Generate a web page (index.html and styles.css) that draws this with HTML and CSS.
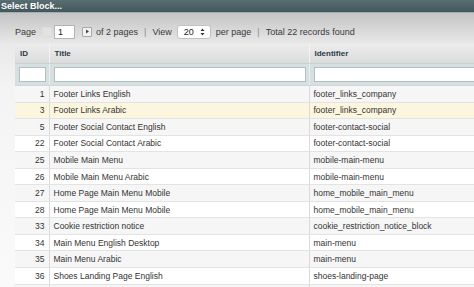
FILE: index.html
```html
<!DOCTYPE html>
<html lang="en">
<head>
  <meta charset="UTF-8" />
  <title>Select Block...</title>
  <link rel="stylesheet" href="styles.css">
</head>
<body>
  <div class="titlebar">Select Block...</div>

  <div class="main">
    <div class="pager">
      <span>Page</span>
      <span class="pg-btn pg-prev"></span>
      <input class="pg-input" type="text" value="1" />
      <span class="pg-btn pg-next">
        <svg width="5" height="5" viewBox="0 0 5 5"><path d="M1 0.5 L4 2.5 L1 4.5 Z" fill="#444"/></svg>
      </span>
      <span class="pg-of">of 2 pages</span>
      <span class="sep">|</span>
      <span>View</span>
      <span class="pg-select">
        20
        <svg width="5" height="8" viewBox="0 0 5 8"><path d="M2.5 0.5 L4.5 3 L0.5 3 Z M2.5 7.5 L4.5 5 L0.5 5 Z" fill="#333"/></svg>
      </span>
      <span>per page</span>
      <span class="sep">|</span>
      <span>Total 22 records found</span>
    </div>

    <table class="grid">
      <colgroup>
        <col class="col-id" />
        <col class="col-title" />
        <col />
      </colgroup>
      <thead>
        <tr class="headings">
          <th>ID</th>
          <th>Title</th>
          <th>Identifier</th>
        </tr>
        <tr class="filter">
          <td><input type="text" /></td>
          <td><input type="text" /></td>
          <td><input type="text" /></td>
        </tr>
      </thead>
      <tbody>
        <tr><td class="num">1</td><td>Footer Links English</td><td>footer_links_company</td></tr>
        <tr class="hover"><td class="num">3</td><td>Footer Links Arabic</td><td>footer_links_company</td></tr>
        <tr><td class="num">5</td><td>Footer Social Contact English</td><td>footer-contact-social</td></tr>
        <tr><td class="num">22</td><td>Footer Social Contact Arabic</td><td>footer-contact-social</td></tr>
        <tr><td class="num">25</td><td>Mobile Main Menu</td><td>mobile-main-menu</td></tr>
        <tr><td class="num">26</td><td>Mobile Main Menu Arabic</td><td>mobile-main-menu</td></tr>
        <tr><td class="num">27</td><td>Home Page Main Menu Mobile</td><td>home_mobile_main_menu</td></tr>
        <tr><td class="num">28</td><td>Home Page Main Menu Mobile</td><td>home_mobile_main_menu</td></tr>
        <tr><td class="num">33</td><td>Cookie restriction notice</td><td>cookie_restriction_notice_block</td></tr>
        <tr><td class="num">34</td><td>Main Menu English Desktop</td><td>main-menu</td></tr>
        <tr><td class="num">35</td><td>Main Menu Arabic</td><td>main-menu</td></tr>
        <tr><td class="num">36</td><td>Shoes Landing Page English</td><td>shoes-landing-page</td></tr>
        <tr><td></td><td></td><td></td></tr>
      </tbody>
    </table>
  </div>
</body>
</html>
```

FILE: styles.css
```css
html, body {
  height: 100%;
}
body {
  margin: 0;
  overflow: hidden;
  font-family: "Liberation Sans", Arial, sans-serif;
  color: #333;
  background: linear-gradient(#c4c4c4 13px, #e9e9e9 44px, #f4f4f4 90px, #fafafa 100%);
}
.titlebar {
  height: 13px;
  line-height: 12px;
  padding-left: 1px;
  font-size: 9px;
  font-weight: bold;
  color: #fff;
  background: linear-gradient(#586e72, #42575b);
  border-bottom: 1px solid #9fb0b2;
  box-sizing: border-box;
}
.main {
  padding-left: 15px;
}
.pager {
  height: 31px;
  padding-top: 6px;
  box-sizing: border-box;
  display: flex;
  align-items: center;
  font-size: 9px;
  color: #3a3a3a;
  white-space: nowrap;
}
.pg-btn {
  width: 8px;
  height: 8px;
  display: flex;
  align-items: center;
  justify-content: center;
  border-radius: 1px;
}
.pg-prev {
  margin-left: 6px;
  background: #e2e2e2;
  border: 1px solid #dcdcdc;
}
.pg-input {
  margin: 0 0 0 2px;
  width: 21px;
  height: 14px;
  padding: 0 3px;
  box-sizing: border-box;
  border: 1px solid #b4b4b4;
  font: 9px "Liberation Sans", Arial, sans-serif;
  color: #222;
}
.pg-next {
  margin-left: 7px;
  background: #f2f2f2;
  border: 1px solid #a8a8a8;
}
.pg-of {
  margin-left: 4px;
}
.sep {
  margin: 0 6px 0 6px;
  color: #888;
}
.pg-select {
  margin: 0 5px 0 5px;
  width: 34px;
  height: 14px;
  box-sizing: border-box;
  padding: 0 5px 0 6px;
  display: flex;
  align-items: center;
  justify-content: space-between;
  background: #fff;
  border: 1px solid #c2c2c2;
  border-radius: 3px;
  color: #222;
}
.grid {
  width: 490px;
  border-collapse: collapse;
  table-layout: fixed;
  font-size: 8.5px;
}
.col-id {
  width: 34px;
}
.col-title {
  width: 260px;
}
.headings th {
  height: 19px;
  padding: 0 5px;
  text-align: left;
  font-size: 8px;
  font-weight: bold;
  color: #2c3b46;
  background: linear-gradient(#ececec, #dcdcdc);
  border-left: 1px solid #f4f4f4;
  border-bottom: 1px solid #c6d3d3;
}
.headings th:first-child,
.filter td:first-child,
tbody td:first-child {
  border-left: none;
}
.filter td {
  height: 21px;
  padding: 0 3px 0 4px;
  background: #d6e0e0;
  border-left: 1px solid #e9efef;
  border-bottom: 1px solid #d0d8d8;
}
.filter input {
  display: block;
  width: 100%;
  height: 15px;
  box-sizing: border-box;
  border: 1px solid #b3bfbf;
  background: #fff;
}
tbody td {
  height: 15.55px;
  padding: 0 4px;
  white-space: nowrap;
  border-left: 1px solid #dadada;
  border-bottom: 1px solid #e3e3e3;
}
tbody tr:nth-child(odd) td {
  background: #f6f6f6;
}
tbody tr:nth-child(even) td {
  background: #fff;
}
tbody tr.hover td {
  background: #fcf6de;
}
td.num {
  text-align: right;
}
```
